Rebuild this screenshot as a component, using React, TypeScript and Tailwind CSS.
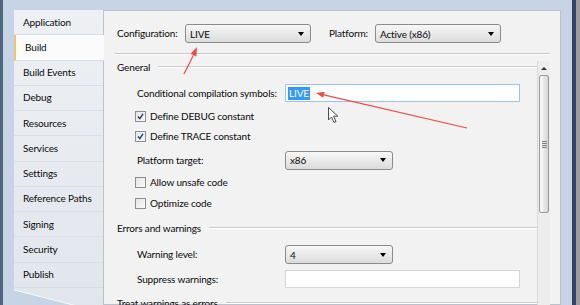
const TABS = [
  'Application',
  'Build',
  'Build Events',
  'Debug',
  'Resources',
  'Services',
  'Settings',
  'Reference Paths',
  'Signing',
  'Security',
  'Publish',
]

function Dropdown({ value, w }: { value: string; w: string }) {
  return (
    <div className={`flex h-[19px] ${w} items-center rounded-[3px] border border-[#8b8b8b] bg-gradient-to-b from-[#f7f7f7] to-[#dcdcdc] pl-[4px] pr-[6px]`}>
      <span className="flex-1 leading-none">{value}</span>
      <span className="h-0 w-0 border-x-[3.5px] border-t-[4px] border-x-transparent border-t-black" />
    </div>
  )
}

function Checkbox({ checked, label }: { checked: boolean; label: string }) {
  return (
    <div className="flex h-[20px] items-center pl-[18px]">
      <span className="flex h-[11px] w-[11px] items-center justify-center border border-[#8e8f8f] bg-gradient-to-br from-[#e4e4e4] to-[#fafafa]">
        {checked && (
          <svg width="7" height="7" viewBox="0 0 7 7">
            <path d="M1 3.5 L2.8 5.6 L6 0.8" fill="none" stroke="#1f3a78" strokeWidth="1.4" />
          </svg>
        )}
      </span>
      <span className="ml-[4px] whitespace-nowrap">{label}</span>
    </div>
  )
}

function Heading({ text }: { text: string }) {
  return (
    <div className="flex h-[16px] items-center">
      <span className="whitespace-nowrap">{text}</span>
      <span className="ml-[8px] h-[2px] flex-1 border-t border-b border-t-[#cdcdcd] border-b-white" />
    </div>
  )
}

function Row({ label, children, h }: { label: string; children: React.ReactNode; h: string }) {
  return (
    <div className={`flex ${h} items-center pl-[20px]`}>
      <span className="w-[148px] whitespace-nowrap">{label}</span>
      {children}
    </div>
  )
}

export default function App() {
  return (
    <div className="relative flex h-[305px] w-[580px] overflow-hidden bg-[#c6d4e5] font-['Lato',sans-serif] text-[10px] tracking-[-0.15px] text-[#0a0a0a]">
      <div className="w-[3px] bg-[#52647f]" />

      <div className="ml-[11px] mt-[10px] flex flex-1">
        {/* tab list */}
        <div className="flex w-[89px] flex-col bg-gradient-to-b from-[#eef0f3] to-[#e1e6ed]">
          {TABS.map(t => (
            <div
              key={t}
              className={`flex h-[25.25px] shrink-0 items-center whitespace-nowrap border-b pl-[9px] ${
                t === 'Build'
                  ? 'relative z-10 -mr-px border-l-2 border-b-[#dedede] border-l-[#f0c46a] bg-[#fbfbfb] pl-[7px]'
                  : 'border-b-[#d9dee6]'
              }`}
            >
              {t}
            </div>
          ))}
          <svg className="flex-1" width="89" height="18" viewBox="0 0 89 18" preserveAspectRatio="none">
            <polygon points="0,2 0,18 60,18" fill="#c6d4e5" />
            <line x1="0" y1="2" x2="60" y2="18" stroke="#f7f8fa" strokeWidth="1" />
          </svg>
        </div>

        {/* content panel */}
        <div className="flex flex-1 flex-col border border-[#b9c2ce] bg-[#f2f2f2]">
          <div className="mt-[13px] flex h-[19px] items-center pl-[13px]">
            <span className="w-[68px] whitespace-nowrap">Configuration:</span>
            <Dropdown value="LIVE" w="w-[126px]" />
            <span className="ml-[18px] w-[46px]">Platform:</span>
            <Dropdown value="Active (x86)" w="w-[126px]" />
          </div>

          <div className="ml-[11px] mr-[10px] mt-[10px] h-[2px] border-t border-b border-t-[#c9c9c9] border-b-white" />

          <div className="mt-[4px] flex flex-1">
            <div className="flex flex-1 flex-col pl-[13px]">
              <Heading text="General" />
              <Row label="Conditional compilation symbols:" h="h-[18px] mt-[9px]">
                <div className="flex h-[18px] w-[235px] items-center border border-[#9cc3e6] bg-white pl-[2px]">
                  <span className="bg-[#3399ff] px-[1px] leading-[13px] text-white">LIVE</span>
                </div>
              </Row>
              <div className="mt-[4px]">
                <Checkbox checked label="Define DEBUG constant" />
              </div>
              <Checkbox checked label="Define TRACE constant" />
              <Row label="Platform target:" h="h-[18px] mt-[5px]">
                <Dropdown value="x86" w="w-[108px]" />
              </Row>
              <div className="mt-[3px]">
                <Checkbox checked={false} label="Allow unsafe code" />
              </div>
              <div className="mt-[1px]">
                <Checkbox checked={false} label="Optimize code" />
              </div>
              <div className="mt-[7px]">
                <Heading text="Errors and warnings" />
              </div>
              <Row label="Warning level:" h="h-[19px] mt-[9px]">
                <Dropdown value="4" w="w-[108px]" />
              </Row>
              <Row label="Suppress warnings:" h="h-[18px] mt-[6px]">
                <div className="h-[18px] w-[235px] border border-[#d6d6d6] bg-white" />
              </Row>
              <div className="mt-[7px]">
                <Heading text="Treat warnings as errors" />
              </div>
            </div>

            {/* scrollbar */}
            <div className="mr-[10px] mt-[2px] flex w-[13px] flex-col border-l border-[#d8d8d8] bg-[#ededed]">
              <div className="flex h-[14px] items-center justify-center">
                <span className="h-0 w-0 border-x-[3px] border-b-[3px] border-x-transparent border-b-[#333]" />
              </div>
              <div className="mx-[1px] flex h-[138px] flex-col items-center justify-center gap-[1px] rounded-[2px] border border-[#9a9a9a] bg-gradient-to-r from-[#fafafa] via-[#e9e9e9] to-[#d4d4d4]">
                <span className="h-px w-[5px] bg-[#7c7c7c]" />
                <span className="h-px w-[5px] bg-[#7c7c7c]" />
                <span className="h-px w-[5px] bg-[#7c7c7c]" />
                <span className="h-px w-[5px] bg-[#7c7c7c]" />
              </div>
            </div>
          </div>
        </div>
      </div>

      <div className="w-[11px]" />
      <div className="w-[4px] bg-[#2f4569]" />
      <div className="w-[4px] bg-[#9d9d9d]" />

      {/* annotations */}
      <svg className="pointer-events-none absolute left-0 top-0" width="580" height="305" viewBox="0 0 580 305">
        <line x1="184" y1="74" x2="193.4" y2="55.2" stroke="#f04848" strokeWidth="1.2" />
        <polygon points="197,47 196.4,56.6 190.6,53.8" fill="#f04848" />
        <line x1="467" y1="128" x2="323.8" y2="94.8" stroke="#f04848" strokeWidth="1.2" />
        <polygon points="316,93 324.6,91.8 323.1,97.8" fill="#f04848" />
        <path
          d="M328.5 107.5 L328.5 120 L331.5 117 L334 122.5 L336 121.6 L333.6 116.2 L337.8 116.2 Z"
          fill="#ffffff"
          stroke="#4a4a4a"
          strokeWidth="1"
        />
      </svg>
    </div>
  )
}
